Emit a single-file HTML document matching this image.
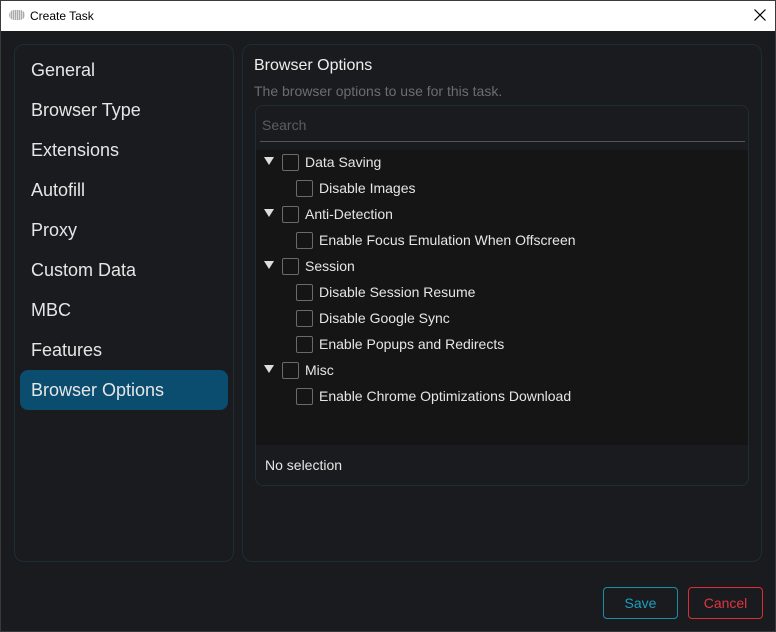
<!DOCTYPE html>
<html><head><meta charset="utf-8"><style>
*{box-sizing:border-box;margin:0;padding:0}
body{width:776px;height:632px;background:#1a1b1e;font-family:"Liberation Sans",sans-serif;position:relative;overflow:hidden}
.frame{position:absolute;left:0;top:0;width:776px;height:632px;border:1px solid #3a3a3a;pointer-events:none;z-index:5}
.title{position:absolute;left:0;top:0;width:776px;height:31px;background:#fff;color:#000;font-size:12px}
.title .t{position:absolute;left:30px;top:9px}
.title svg{position:absolute;left:754px;top:9px}
.logo{position:absolute;left:9px;top:10px;width:16px;height:10px;border-radius:5px;background:repeating-linear-gradient(90deg,#aaa 0 1px,#ddd 1px 2px)}
.panel{position:absolute;border:1px solid #1d2d36;border-radius:10px;background:#1a1b1e}
.nav{position:absolute;left:31px;font-size:18px;color:#e6e6e6}
.sel{position:absolute;left:20px;top:370px;width:208px;height:40px;background:#0b4d6f;border-radius:8px}
.h{position:absolute;left:254px;top:57px;font-size:16px;color:#eee}
.sub{position:absolute;left:254px;top:83px;font-size:14px;color:#6a6d72}
.box{position:absolute;left:255px;top:105px;width:494px;height:381px;border:1px solid #1d2d36;border-radius:8px;background:#1a1b1e;overflow:hidden}
.search{position:absolute;left:6px;top:11px;font-size:14px;color:#5a5d62}
.line{position:absolute;left:4px;top:35px;width:485px;height:1px;background:#555}
.tree{position:absolute;left:0;top:44px;width:494px;height:295px;background:#151515}
.row{position:absolute;font-size:14px;color:#e6e6e6;height:20px;line-height:18px}
.cb{display:inline-block;width:17px;height:17px;border:1px solid #6a6a6a;border-radius:2px;vertical-align:middle;margin-right:6px;position:relative;top:-1px}
.tri{position:absolute;left:-18px;top:4px;width:0;height:0;border-left:5px solid transparent;border-right:5px solid transparent;border-top:8px solid #ddd}
.nosel{position:absolute;left:9px;top:351px;font-size:14px;color:#e6e6e6}
.btn{position:absolute;top:587px;width:75px;height:32px;border-radius:4px;font-size:14px;text-align:center;line-height:30px}
</style></head><body>
<div class="frame"></div>
<div class="title"><div class="logo"></div><span class="t">Create Task</span>
<svg width="12" height="12" viewBox="0 0 12 12"><path d="M0.5 0.5L11.5 11.5M11.5 0.5L0.5 11.5" stroke="#000" stroke-width="1.2"/></svg></div>
<div class="panel" style="left:14px;top:44px;width:220px;height:518px"></div>
<div class="sel"></div>
<div class="nav" style="top:60px">General</div>
<div class="nav" style="top:100px">Browser Type</div>
<div class="nav" style="top:140px">Extensions</div>
<div class="nav" style="top:180px">Autofill</div>
<div class="nav" style="top:220px">Proxy</div>
<div class="nav" style="top:260px">Custom Data</div>
<div class="nav" style="top:300px">MBC</div>
<div class="nav" style="top:340px">Features</div>
<div class="nav" style="top:380px">Browser Options</div>
<div class="panel" style="left:242px;top:44px;width:520px;height:518px"></div>
<div class="h">Browser Options</div>
<div class="sub">The browser options to use for this task.</div>
<div class="box">
<div class="search">Search</div><div class="line"></div>
<div class="tree">
<div class="row" style="left:26px;top:3px"><span class="tri"></span><span class="cb"></span>Data Saving</div>
<div class="row" style="left:40px;top:29px"><span class="cb"></span>Disable Images</div>
<div class="row" style="left:26px;top:55px"><span class="tri"></span><span class="cb"></span>Anti-Detection</div>
<div class="row" style="left:40px;top:81px"><span class="cb"></span>Enable Focus Emulation When Offscreen</div>
<div class="row" style="left:26px;top:107px"><span class="tri"></span><span class="cb"></span>Session</div>
<div class="row" style="left:40px;top:133px"><span class="cb"></span>Disable Session Resume</div>
<div class="row" style="left:40px;top:159px"><span class="cb"></span>Disable Google Sync</div>
<div class="row" style="left:40px;top:185px"><span class="cb"></span>Enable Popups and Redirects</div>
<div class="row" style="left:26px;top:211px"><span class="tri"></span><span class="cb"></span>Misc</div>
<div class="row" style="left:40px;top:237px"><span class="cb"></span>Enable Chrome Optimizations Download</div>
</div>
<div class="nosel">No selection</div>
</div>
<div class="btn" style="left:603px;border:1px solid #1b8fa8;color:#1b9fc0">Save</div>
<div class="btn" style="left:688px;border:1px solid #d62f3a;color:#e03540">Cancel</div>
</body></html>
